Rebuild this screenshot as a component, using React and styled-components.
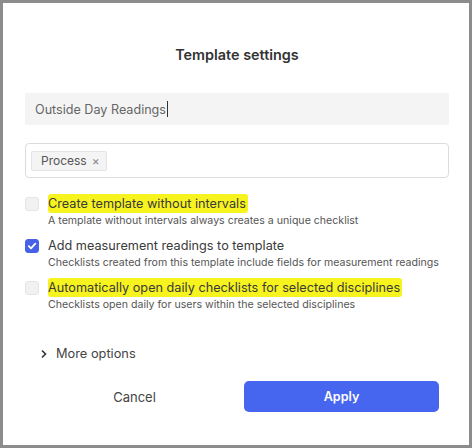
import styled, { createGlobalStyle } from "styled-components";

const GlobalStyle = createGlobalStyle`
  html, body {
    margin: 0;
    padding: 0;
    background: #8c8c8c;
  }
  body {
    font-family: Inter, "Noto Sans", sans-serif;
  }
`;

const Frame = styled.div`
  width: 472px;
  height: 448px;
  box-sizing: border-box;
  padding: 3px;
`;

const Modal = styled.div`
  height: 100%;
  background: #ffffff;
  box-sizing: border-box;
  padding: 41px 20px 0 22px;
  display: flex;
  flex-direction: column;
`;

const Title = styled.h1`
  margin: 0 0 27px;
  text-align: center;
  font-size: 14.4px;
  font-weight: 600;
  color: #333333;
  line-height: 22px;
`;

const NameField = styled.div`
  height: 32px;
  background: #f4f4f4;
  border-radius: 2px;
  display: flex;
  align-items: center;
  padding: 0 10px;
  font-size: 12.6px;
  color: #666666;
  margin-bottom: 18px;
`;

const Caret = styled.span`
  display: inline-block;
  width: 1px;
  height: 16px;
  background: #333;
  margin-left: 1px;
`;

const TagField = styled.div`
  height: 35px;
  box-sizing: border-box;
  border: 1px solid #dcdcdc;
  border-radius: 4px;
  display: flex;
  align-items: center;
  padding: 0 5px;
  margin-bottom: 17px;
`;

const Tag = styled.span`
  display: inline-flex;
  align-items: center;
  gap: 5px;
  height: 20px;
  box-sizing: border-box;
  padding: 0 6px 0 9px;
  background: #f4f4f4;
  border: 1px solid #e4e4e4;
  border-radius: 2px;
  font-size: 12px;
  color: #555;
`;

const TagClose = styled.span`
  font-size: 12px;
  color: #888;
`;

const Options = styled.div`
  display: flex;
  flex-direction: column;
  gap: 8px;
`;

const Option = styled.div`
  display: grid;
  grid-template-columns: 23px 1fr;
  align-items: start;
`;

const Box = styled.span`
  width: 14px;
  height: 14px;
  margin-top: 2px;
  box-sizing: border-box;
  border-radius: 3px;
  display: flex;
  align-items: center;
  justify-content: center;
  background: ${(p) => (p.$checked ? "#4762e6" : "#f1f1f1")};
  border: 1px solid ${(p) => (p.$checked ? "#4762e6" : "#e6e6e6")};
`;

const Label = styled.div`
  font-size: 12.7px;
  line-height: 17px;
  color: #3a3a3a;
`;

const Mark = styled.span`
  background: ${(p) => (p.$on ? "#f6f31f" : "transparent")};
  border-radius: 3px;
  padding: 2px 2px 2px 0;
`;

const Desc = styled.div`
  font-size: 10.6px;
  line-height: 17px;
  color: #555555;
  white-space: nowrap;
`;

const More = styled.div`
  margin: 33px 0 0 15px;
  display: flex;
  align-items: center;
  gap: 8px;
  font-size: 12.8px;
  color: #444;
`;

const Footer = styled.div`
  margin-top: 20px;
  display: grid;
  grid-template-columns: 219px 195px;
  align-items: center;
`;

const CancelButton = styled.button`
  border: none;
  background: none;
  font-family: inherit;
  font-size: 13px;
  color: #444;
  height: 31px;
`;

const ApplyButton = styled.button`
  border: none;
  border-radius: 5px;
  background: #4766f0;
  color: #fff;
  font-family: inherit;
  font-weight: 600;
  font-size: 12.6px;
  height: 31px;
`;

const Check = () => (
  <svg width="10" height="10" viewBox="0 0 10 10">
    <path d="M1.8 5.2 L4 7.3 L8.3 2.7" fill="none" stroke="#fff" strokeWidth="1.8" strokeLinecap="round" strokeLinejoin="round" />
  </svg>
);

const options = [
  {
    label: "Create template without intervals",
    desc: "A template without intervals always creates a unique checklist",
    checked: false,
    marked: true,
  },
  {
    label: "Add measurement readings to template",
    desc: "Checklists created from this template include fields for measurement readings",
    checked: true,
    marked: false,
  },
  {
    label: "Automatically open daily checklists for selected disciplines",
    desc: "Checklists open daily for users within the selected disciplines",
    checked: false,
    marked: true,
  },
];

export default function App() {
  return (
    <>
      <GlobalStyle />
      <Frame>
        <Modal>
          <Title>Template settings</Title>
          <NameField>
            Outside Day Readings
            <Caret />
          </NameField>
          <TagField>
            <Tag>
              Process <TagClose>×</TagClose>
            </Tag>
          </TagField>
          <Options>
            {options.map((o) => (
              <Option key={o.label}>
                <Box $checked={o.checked}>{o.checked && <Check />}</Box>
                <div>
                  <Label>
                    <Mark $on={o.marked}>{o.label}</Mark>
                  </Label>
                  <Desc>{o.desc}</Desc>
                </div>
              </Option>
            ))}
          </Options>
          <More>
            <svg width="8" height="10" viewBox="0 0 8 10">
              <path d="M2 1.5 L5.5 5 L2 8.5" fill="none" stroke="#333" strokeWidth="1.6" />
            </svg>
            More options
          </More>
          <Footer>
            <CancelButton>Cancel</CancelButton>
            <ApplyButton>Apply</ApplyButton>
          </Footer>
        </Modal>
      </Frame>
    </>
  );
}
